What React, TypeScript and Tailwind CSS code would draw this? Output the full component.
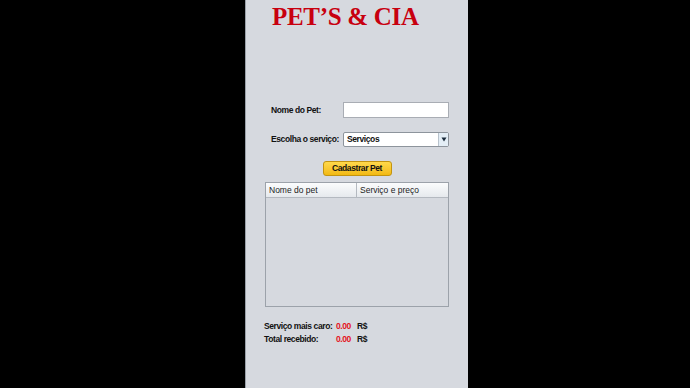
const LABEL_FONT = { fontFamily: '"Liberation Sans", Arial, sans-serif', letterSpacing: "-0.4px" };

export default function App() {
  return (
    <div className="flex h-[388px] w-[690px] bg-black pl-[245px]">
      <div className="flex h-full w-[223px] flex-col border-l border-[#9aa0a8] bg-[#d6d9df]">
        <h1 className="ml-[26px] mt-[3px] text-[25px] font-bold leading-[28px] tracking-[-0.3px] text-[#c8000f] [font-family:'Liberation_Serif',serif]">
          PET’S &amp; CIA
        </h1>

        <div className="mt-[71px] flex items-center pl-[25px] pr-[19px]">
          <span className="w-[72px] text-[8.5px] font-bold text-[#111]" style={LABEL_FONT}>
            Nome do Pet:
          </span>
          <div className="h-[16px] flex-1 border border-[#a9adb4] bg-white" />
        </div>

        <div className="mt-[14px] flex items-center pl-[25px] pr-[19px]">
          <span className="w-[72px] whitespace-nowrap text-[8.5px] font-bold text-[#111]" style={LABEL_FONT}>
            Escolha o serviço:
          </span>
          <div className="flex h-[15px] flex-1 items-center rounded-[2px] border border-[#8d949c] bg-white">
            <span className="flex-1 pl-[3px] text-[8.5px] font-bold text-[#111]" style={LABEL_FONT}>
              Serviços
            </span>
            <div className="flex h-full w-[10px] items-center justify-center border-l border-[#b8c2cc] bg-[#e4eef6]">
              <svg width="6" height="5" viewBox="0 0 6 5">
                <path d="M0.5 0.5 L5.5 0.5 L3 4.5 Z" fill="#1a2a3a" />
              </svg>
            </div>
          </div>
        </div>

        <div className="mt-[14px] flex justify-center">
          <div
            className="flex h-[15px] w-[69px] items-center justify-center rounded-[3px] border border-[#c39410] bg-gradient-to-b from-[#ffd94a] to-[#f2b90e] text-[8.5px] font-bold text-[#111]"
            style={LABEL_FONT}
          >
            Cadastrar Pet
          </div>
        </div>

        <div className="ml-[19px] mt-[6px] flex h-[125px] w-[184px] flex-col border border-[#9ca2aa]">
          <div className="flex h-[15px] border-b border-[#b4b9c0] bg-gradient-to-b from-[#fbfcfd] to-[#e6e9ed] text-[8.5px] text-[#222] [font-family:'Liberation_Sans',Arial,sans-serif]">
            <div className="flex w-[91px] items-center border-r border-[#b4b9c0] pl-[3px]">Nome do pet</div>
            <div className="flex flex-1 items-center pl-[3px]">Serviço e preço</div>
          </div>
        </div>

        <div className="ml-[18px] mt-[14px] flex flex-col gap-[2px] text-[8.5px] font-bold leading-[11px]" style={LABEL_FONT}>
          <div className="flex">
            <span className="w-[72px] whitespace-nowrap text-[#111]">Serviço mais caro:</span>
            <span className="w-[21px] text-[#e4141c]">0.00</span>
            <span className="text-[#111]">R$</span>
          </div>
          <div className="flex">
            <span className="w-[72px] text-[#111]">Total recebido:</span>
            <span className="w-[21px] text-[#e4141c]">0.00</span>
            <span className="text-[#111]">R$</span>
          </div>
        </div>
      </div>
    </div>
  );
}
